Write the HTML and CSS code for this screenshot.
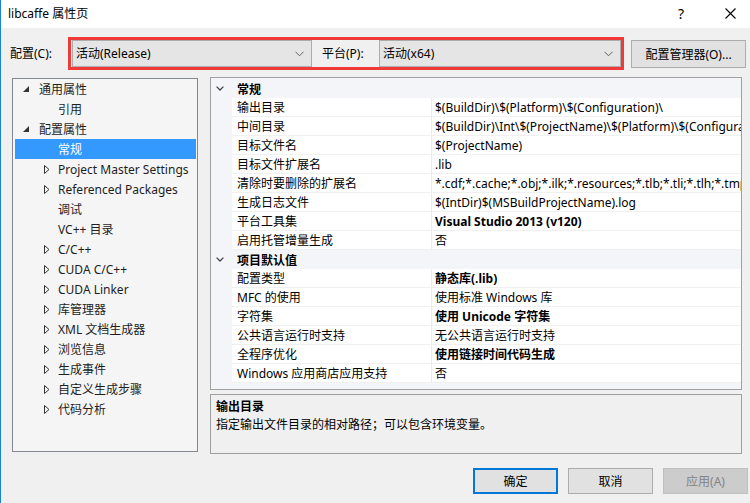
FILE: index.html
```html
<!DOCTYPE html>
<html lang="zh-CN">
<head>
<meta charset="utf-8">
<title>libcaffe 属性页</title>
<link rel="stylesheet" href="styles.css">
</head>
<body>
<div class="window">
  <div class="titlebar">
    <span class="title">libcaffe 属性页</span>
    <div class="tb-btns">
      <span class="help">?</span>
      <svg class="close" width="11" height="11" viewBox="0 0 11 11"><path d="M0.5 0.5 L10.5 10.5 M10.5 0.5 L0.5 10.5" stroke="#000" stroke-width="1.1" fill="none"/></svg>
    </div>
  </div>

  <div class="toolbar">
    <span class="lbl lbl1">配置(C):</span>
    <div class="highlight">
      <div class="combo c1"><span>活动(Release)</span><svg width="9" height="6" viewBox="0 0 9 6"><polyline points="0.5,0.8 4.5,4.8 8.5,0.8" stroke="#606060" stroke-width="1" fill="none"/></svg></div>
      <span class="lbl lbl2">平台(P):</span>
      <div class="combo c2"><span>活动(x64)</span><svg width="9" height="6" viewBox="0 0 9 6"><polyline points="0.5,0.8 4.5,4.8 8.5,0.8" stroke="#606060" stroke-width="1" fill="none"/></svg></div>
    </div>
    <button class="btn cfgmgr">配置管理器(O)...</button>
  </div>

  <div class="main">
    <div class="tree">
      <div class="node l0"><span class="exp"><svg width="6" height="6" viewBox="0 0 6 6"><polygon points="6,0 6,6 0,6" fill="#333"/></svg></span>通用属性</div>
      <div class="node l1 leaf">引用</div>
      <div class="node l0"><span class="exp"><svg width="6" height="6" viewBox="0 0 6 6"><polygon points="6,0 6,6 0,6" fill="#333"/></svg></span>配置属性</div>
      <div class="node l1 leaf sel">常规</div>
      <div class="node l1"><span class="exp"><svg width="6" height="9" viewBox="0 0 6 9"><polygon points="0.5,0.5 5,4.5 0.5,8.5" fill="none" stroke="#333" stroke-width="1"/></svg></span>Project Master Settings</div>
      <div class="node l1"><span class="exp"><svg width="6" height="9" viewBox="0 0 6 9"><polygon points="0.5,0.5 5,4.5 0.5,8.5" fill="none" stroke="#333" stroke-width="1"/></svg></span>Referenced Packages</div>
      <div class="node l1 leaf">调试</div>
      <div class="node l1 leaf">VC++ 目录</div>
      <div class="node l1"><span class="exp"><svg width="6" height="9" viewBox="0 0 6 9"><polygon points="0.5,0.5 5,4.5 0.5,8.5" fill="none" stroke="#333" stroke-width="1"/></svg></span>C/C++</div>
      <div class="node l1"><span class="exp"><svg width="6" height="9" viewBox="0 0 6 9"><polygon points="0.5,0.5 5,4.5 0.5,8.5" fill="none" stroke="#333" stroke-width="1"/></svg></span>CUDA C/C++</div>
      <div class="node l1"><span class="exp"><svg width="6" height="9" viewBox="0 0 6 9"><polygon points="0.5,0.5 5,4.5 0.5,8.5" fill="none" stroke="#333" stroke-width="1"/></svg></span>CUDA Linker</div>
      <div class="node l1"><span class="exp"><svg width="6" height="9" viewBox="0 0 6 9"><polygon points="0.5,0.5 5,4.5 0.5,8.5" fill="none" stroke="#333" stroke-width="1"/></svg></span>库管理器</div>
      <div class="node l1"><span class="exp"><svg width="6" height="9" viewBox="0 0 6 9"><polygon points="0.5,0.5 5,4.5 0.5,8.5" fill="none" stroke="#333" stroke-width="1"/></svg></span>XML 文档生成器</div>
      <div class="node l1"><span class="exp"><svg width="6" height="9" viewBox="0 0 6 9"><polygon points="0.5,0.5 5,4.5 0.5,8.5" fill="none" stroke="#333" stroke-width="1"/></svg></span>浏览信息</div>
      <div class="node l1"><span class="exp"><svg width="6" height="9" viewBox="0 0 6 9"><polygon points="0.5,0.5 5,4.5 0.5,8.5" fill="none" stroke="#333" stroke-width="1"/></svg></span>生成事件</div>
      <div class="node l1"><span class="exp"><svg width="6" height="9" viewBox="0 0 6 9"><polygon points="0.5,0.5 5,4.5 0.5,8.5" fill="none" stroke="#333" stroke-width="1"/></svg></span>自定义生成步骤</div>
      <div class="node l1"><span class="exp"><svg width="6" height="9" viewBox="0 0 6 9"><polygon points="0.5,0.5 5,4.5 0.5,8.5" fill="none" stroke="#333" stroke-width="1"/></svg></span>代码分析</div>
    </div>

    <div class="right">
      <div class="grid">
        <div class="cat"><span class="gut"><svg width="8" height="5" viewBox="0 0 8 5"><polyline points="0.6,0.6 4,4 7.4,0.6" stroke="#444" stroke-width="1.3" fill="none"/></svg></span><span class="cat-name">常规</span></div>
        <div class="row"><span class="gut"></span><span class="name">输出目录</span><span class="val">$(BuildDir)\$(Platform)\$(Configuration)\</span></div>
        <div class="row"><span class="gut"></span><span class="name">中间目录</span><span class="val">$(BuildDir)\Int\$(ProjectName)\$(Platform)\$(Configuration)\</span></div>
        <div class="row"><span class="gut"></span><span class="name">目标文件名</span><span class="val">$(ProjectName)</span></div>
        <div class="row"><span class="gut"></span><span class="name">目标文件扩展名</span><span class="val">.lib</span></div>
        <div class="row"><span class="gut"></span><span class="name">清除时要删除的扩展名</span><span class="val">*.cdf;*.cache;*.obj;*.ilk;*.resources;*.tlb;*.tli;*.tlh;*.tmp;*.rsp;*.pgc;*.pgd</span></div>
        <div class="row"><span class="gut"></span><span class="name">生成日志文件</span><span class="val">$(IntDir)$(MSBuildProjectName).log</span></div>
        <div class="row"><span class="gut"></span><span class="name">平台工具集</span><span class="val b">Visual Studio 2013 (v120)</span></div>
        <div class="row"><span class="gut"></span><span class="name">启用托管增量生成</span><span class="val">否</span></div>
        <div class="cat"><span class="gut"><svg width="8" height="5" viewBox="0 0 8 5"><polyline points="0.6,0.6 4,4 7.4,0.6" stroke="#444" stroke-width="1.3" fill="none"/></svg></span><span class="cat-name">项目默认值</span></div>
        <div class="row"><span class="gut"></span><span class="name">配置类型</span><span class="val b">静态库(.lib)</span></div>
        <div class="row"><span class="gut"></span><span class="name">MFC 的使用</span><span class="val">使用标准 Windows 库</span></div>
        <div class="row"><span class="gut"></span><span class="name">字符集</span><span class="val b">使用 Unicode 字符集</span></div>
        <div class="row"><span class="gut"></span><span class="name">公共语言运行时支持</span><span class="val">无公共语言运行时支持</span></div>
        <div class="row"><span class="gut"></span><span class="name">全程序优化</span><span class="val b">使用链接时间代码生成</span></div>
        <div class="row"><span class="gut"></span><span class="name">Windows 应用商店应用支持</span><span class="val">否</span></div>
      </div>
      <div class="desc">
        <div class="desc-title">输出目录</div>
        <div class="desc-text">指定输出文件目录的相对路径；可以包含环境变量。</div>
      </div>
    </div>
  </div>

  <div class="footer">
    <button class="btn ok">确定</button>
    <button class="btn">取消</button>
    <button class="btn disabled">应用(A)</button>
  </div>
</div>
</body>
</html>
```

FILE: styles.css
```css
* { box-sizing: border-box; }
html, body { margin: 0; padding: 0; }
body {
  font-family: "Noto Sans", "Noto Sans CJK SC", sans-serif;
  font-size: 12px;
  color: #000;
  background: #f0f0f0;
}
.window {
  width: 750px;
  height: 503px;
  background: #f0f0f0;
  border-left: 1px solid #1883d7;
  overflow: hidden;
}
.titlebar {
  height: 28px;
  background: #fff;
  display: flex;
  align-items: center;
  justify-content: space-between;
  padding-left: 7px;
}
.title { font-size: 12px; line-height: 16px; margin-top: -1px; }
.tb-btns { display: flex; align-items: center; }
.help { font-size: 14px; width: 10px; margin-right: 37px; margin-top: -1px; }
.close { margin-right: 14px; margin-top: -2px; }

.toolbar {
  margin-top: 9px;
  height: 33px;
  display: flex;
  align-items: center;
  padding-left: 9px;
}
.lbl { display: inline-block; line-height: 16px; }
.lbl1 { width: 58px; }
.highlight {
  width: 556px;
  height: 33px;
  border: 3px solid #f03a3a;
  display: flex;
  align-items: center;
}
.combo {
  height: 27px;
  background: #e5e5e5;
  border: 1px solid #acacac;
  display: flex;
  align-items: center;
  justify-content: space-between;
  padding: 0 7px 0 3px;
}
.combo span { line-height: 16px; }
.c1 { width: 240px; margin-left: 1px; }
.lbl2 { width: 57px; margin-left: 10px; }
.c2 { width: 242px; }

.btn {
  font-family: "Noto Sans", "Noto Sans CJK SC", sans-serif;
  font-size: 12px;
  color: #000;
  background: #e1e1e1;
  border: 1px solid #adadad;
  height: 26px;
  width: 85px;
  padding: 0;
  margin: 0;
}
.cfgmgr { width: 115px; height: 28px; margin-left: 7px; }

.main {
  margin-top: 7px;
  display: flex;
  align-items: flex-start;
}
.tree {
  margin-top: 1px;
  margin-left: 11px;
  width: 186px;
  height: 374px;
  border: 1px solid #828790;
  background: #f5f5f5;
  padding: 0 1px;
}
.node {
  height: 20px;
  display: flex;
  align-items: center;
  color: #1e1e1e;
  white-space: nowrap;
  margin-left: 1px;
}
.node.l0 { padding-left: 8px; }
.node.l0 .exp { width: 16px; display: flex; align-items: center; }
.node.l1 { padding-left: 29px; }
.node.l1 .exp { width: 14px; display: flex; align-items: center; }
.node.l1.leaf { padding-left: 43px; }
.node.sel { background: #3399ff; color: #fff; }

.right {
  margin-left: 12px;
  width: 532px;
  display: flex;
  flex-direction: column;
}
.grid {
  height: 313px;
  border: 1px solid #a0a0a0;
  background: #f4f5f8;
  padding-top: 1px;
}
.cat {
  height: 19px;
  display: flex;
  align-items: center;
  font-weight: bold;
}
.gut {
  width: 21px;
  flex: none;
  display: flex;
  align-items: center;
  padding-left: 5px;
}
.cat-name { padding-left: 5px; }
.row {
  height: 19px;
  display: flex;
}
.name {
  width: 200px;
  flex: none;
  background: #fff;
  border-bottom: 1px solid #f0f0f0;
  border-right: 1px solid #ececec;
  padding-left: 5px;
  display: flex;
  align-items: center;
  white-space: nowrap;
  overflow: hidden;
}
.val {
  flex: 1;
  background: #fff;
  border-bottom: 1px solid #f0f0f0;
  padding-left: 3px;
  display: flex;
  align-items: center;
  white-space: nowrap;
  overflow: hidden;
}
.b { font-weight: bold; }

.desc {
  margin-top: 4px;
  height: 60px;
  border: 1px solid #a0a0a0;
  background: #f0f0f0;
  padding: 3px 5px 0;
}
.desc-title { font-weight: bold; line-height: 18px; }
.desc-text { line-height: 18px; }

.footer {
  margin-top: 14px;
  display: flex;
  justify-content: flex-end;
  gap: 10px;
  padding-right: 2px;
}
.btn.ok { border: 2px solid #0078d7; }
.btn.disabled { background: #cccccc; border-color: #bfbfbf; color: #838383; }
```
